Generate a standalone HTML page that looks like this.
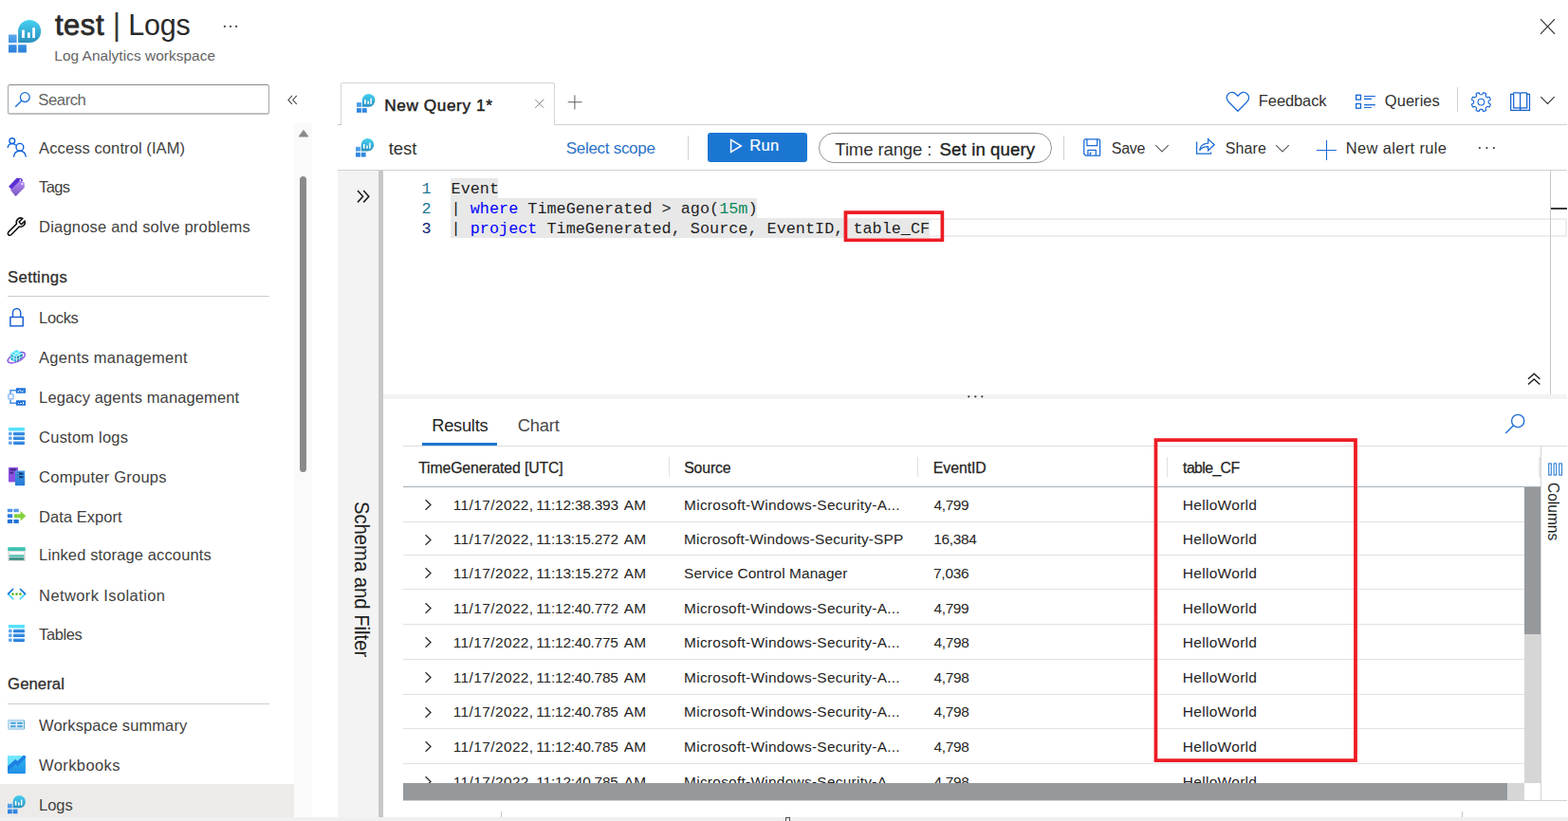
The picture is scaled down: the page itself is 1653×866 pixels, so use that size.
<!DOCTYPE html>
<html lang="en">
<head>
<meta charset="utf-8">
<title>test | Logs - Log Analytics workspace</title>
<style>
*{box-sizing:border-box;margin:0;padding:0}
html,body{width:1653px;height:866px;overflow:hidden;background:#fff}
body{font-family:"Liberation Sans",sans-serif;color:#323130;position:relative}
#app{position:absolute;left:0;top:0;width:1653px;height:866px;overflow:hidden;background:#fff}
.t{position:absolute;white-space:pre;display:block}
.b{position:absolute;display:block}
svg{position:absolute;overflow:visible}
.rot{position:absolute;white-space:pre;transform-origin:0 0;transform:rotate(90deg)}
</style>
</head>
<body>
<div id="app">
<div class="b" style="left:0px;top:862px;width:1653px;height:4px;background:#f0f0f0;"></div>
<div class="b" style="left:8px;top:89px;width:276px;height:32px;border:1px solid #a6a6a6;border-radius:2.5px;background:#fff;border-top-color:#8a8a8a;border-bottom:2px solid #c0c0c0"></div>
<div class="b" style="left:310px;top:130px;width:19px;height:732px;background:#fafafa;"></div>
<svg style="left:314px;top:136px" width="12" height="9" viewBox="0 0 12 9"><path d="M1.2 8 L6 1.4 L10.8 8 Z" fill="#8a8a8a" stroke="#8a8a8a" stroke-width="1" stroke-linejoin="round"/></svg>
<div class="b" style="left:316px;top:186px;width:7px;height:312px;background:#8a8a8a;border-radius:3.5px"></div>
<div class="b" style="left:8px;top:312px;width:276px;height:1px;background:#cdcdcd;"></div>
<div class="b" style="left:8px;top:742px;width:276px;height:1px;background:#cdcdcd;"></div>
<div class="b" style="left:0px;top:827px;width:310px;height:35px;background:#edebe9;"></div>
<div class="b" style="left:359px;top:87px;width:226px;height:45px;border:1px solid #d6d6d6;border-bottom:none;border-radius:2.5px 2.5px 0 0;background:#fff"></div>
<div class="b" style="left:356px;top:131px;width:4px;height:1px;background:#c8c6c4;"></div>
<div class="b" style="left:584px;top:131px;width:1068px;height:1px;background:#d2d0ce;"></div>
<div class="b" style="left:356px;top:179px;width:1296px;height:1px;background:#d2d0ce;"></div>
<div class="b" style="left:725px;top:143px;width:1px;height:26px;background:#d2d0ce;"></div>
<div class="b" style="left:1121px;top:143px;width:1px;height:26px;background:#d2d0ce;"></div>
<div class="b" style="left:1536px;top:92px;width:1px;height:26px;background:#d2d0ce;"></div>
<div class="b" style="left:746px;top:140px;width:105px;height:31px;background:#1b76d2;border-radius:3px"></div>
<div class="b" style="left:863px;top:140px;width:246px;height:32px;border:1px solid #979593;border-radius:16px;background:#fff"></div>
<div class="b" style="left:356px;top:180px;width:43px;height:682px;background:#f3f3f3;"></div>
<div class="b" style="left:399px;top:180px;width:5px;height:682px;background:#c8c8c8;"></div>
<div class="b" style="left:475px;top:188px;width:50px;height:21px;background:#e8e8e8;"></div>
<div class="b" style="left:475px;top:209px;width:323px;height:21px;background:#e8e8e8;"></div>
<div class="b" style="left:475px;top:230px;width:505px;height:21px;background:#e8e8e8;"></div>
<svg style="left:0;top:0" width="1653" height="866" viewBox="0 0 1653 866"><path d="M980 230.3H1651.9V249.9H980Z M980 231.9V248.3H1650.3V231.9Z" fill="#ebebeb" fill-rule="evenodd"/></svg>
<div class="b" style="left:1634px;top:180px;width:1px;height:236px;background:#c8c8c8;"></div>
<div class="b" style="left:1635px;top:219px;width:17px;height:2px;background:#3a3a3a;"></div>
<div class="b" style="left:404px;top:416px;width:1248px;height:5px;background:#f3f3f3;"></div>
<div class="b" style="left:425px;top:470px;width:1227px;height:1px;background:#dcdcdc;"></div>
<div class="b" style="left:445px;top:467.2px;width:79.3px;height:2.6px;background:#1b76d2;"></div>
<div class="b" style="left:705px;top:482px;width:1px;height:21px;background:#e1e1e1;"></div>
<div class="b" style="left:967px;top:482px;width:1px;height:21px;background:#e1e1e1;"></div>
<div class="b" style="left:1230px;top:482px;width:1px;height:21px;background:#e1e1e1;"></div>
<div class="b" style="left:1621.5px;top:482px;width:2px;height:21px;background:#e6e6e6;"></div>
<div class="b" style="left:425px;top:513px;width:1200px;height:1px;background:#a9b1b8;"></div>
<div class="b" style="left:425px;top:550px;width:1182px;height:1px;background:#dfe2e5;"></div>
<div class="b" style="left:425px;top:585px;width:1182px;height:1px;background:#dfe2e5;"></div>
<div class="b" style="left:425px;top:621px;width:1182px;height:1px;background:#dfe2e5;"></div>
<div class="b" style="left:425px;top:658px;width:1182px;height:1px;background:#dfe2e5;"></div>
<div class="b" style="left:425px;top:695px;width:1182px;height:1px;background:#dfe2e5;"></div>
<div class="b" style="left:425px;top:732px;width:1182px;height:1px;background:#dfe2e5;"></div>
<div class="b" style="left:425px;top:768px;width:1182px;height:1px;background:#dfe2e5;"></div>
<div class="b" style="left:425px;top:805px;width:1182px;height:1px;background:#dfe2e5;"></div>
<div class="b" style="left:1624px;top:471px;width:1px;height:374px;background:#d0d4d8;"></div>
<div class="b" style="left:1607px;top:514px;width:17px;height:312px;background:#d6d6d6;"></div>
<div class="b" style="left:1607px;top:514px;width:17px;height:155px;background:#96999c;"></div>
<svg width="0" height="0" style="left:0;top:0"><defs>
<linearGradient id="gb" x1="0" y1="0" x2="0" y2="1"><stop offset="0" stop-color="#45d1f2"/><stop offset="1" stop-color="#2a8fbd"/></linearGradient>
<linearGradient id="gs" x1="0" y1="0" x2="0" y2="1"><stop offset="0" stop-color="#5ea9ee"/><stop offset="1" stop-color="#3d93e6"/></linearGradient>
<linearGradient id="gs2" x1="0" y1="0" x2="0" y2="1"><stop offset="0" stop-color="#3b8fe4"/><stop offset="1" stop-color="#2a7fdb"/></linearGradient>
<linearGradient id="gt" x1="0" y1="0" x2="0" y2="1"><stop offset="0" stop-color="#b38af5"/><stop offset="1" stop-color="#7b55c0"/></linearGradient>
<linearGradient id="gr" x1="0" y1="0" x2="0" y2="1"><stop offset="0" stop-color="#4a9be8"/><stop offset="1" stop-color="#1f78d6"/></linearGradient>
<linearGradient id="gw" x1="0" y1="0" x2="0" y2="1"><stop offset="0" stop-color="#2fa2f0"/><stop offset="1" stop-color="#1c83e0"/></linearGradient>
<g id="logo">
<path d="M10.1 24.1V12.05A12.05 12.05 0 1 1 22.15 24.1Z" fill="url(#gb)"/>
<rect x="14.1" y="10.6" width="2.8" height="8.4" fill="#fff"/>
<rect x="20" y="13.3" width="2.7" height="5.7" fill="#fff"/>
<rect x="25.2" y="8.2" width="2.7" height="10.8" fill="#fff"/>
<rect x="0" y="15.6" width="8.6" height="8.5" rx="0.5" fill="url(#gs)"/>
<rect x="0" y="26.2" width="8.6" height="8.4" rx="0.5" fill="url(#gs2)"/>
<rect x="10.1" y="26.2" width="8.8" height="8.4" rx="0.5" fill="url(#gs2)"/>
</g>
<g id="tbl">
<rect x="0" y="0" width="17" height="3.5" rx="0.5" fill="#55e0fb"/>
<rect x="0" y="4.7" width="3.6" height="3.5" rx="0.8" fill="#63a6ef"/><rect x="5" y="4.7" width="12" height="3.5" rx="0.8" fill="url(#gr)"/>
<rect x="0" y="9.6" width="3.6" height="3.4" rx="0.8" fill="#63a6ef"/><rect x="5" y="9.6" width="12" height="3.4" rx="0.8" fill="url(#gr)"/>
<rect x="0" y="14.5" width="3.6" height="3.4" rx="0.8" fill="#63a6ef"/><rect x="5" y="14.5" width="12" height="3.4" rx="0.8" fill="url(#gr)"/>
</g>
</defs></svg>
<svg style="left:9px;top:20.9px" width="34.20" height="34.6" viewBox="0 0 34.2 34.6"><use href="#logo"/></svg>
<svg style="left:375.8px;top:99.2px" width="19.47" height="19.7" viewBox="0 0 34.2 34.6"><use href="#logo"/></svg>
<svg style="left:375px;top:146px" width="19.27" height="19.5" viewBox="0 0 34.2 34.6"><use href="#logo"/></svg>
<svg style="left:7.9px;top:839.3px" width="18.98" height="19.2" viewBox="0 0 34.2 34.6"><use href="#logo"/></svg>
<svg style="left:15px;top:96px" width="18" height="18" viewBox="0 0 18 18"><circle cx="11.3" cy="6.6" r="4.9" fill="none" stroke="#1a6bd6" stroke-width="1.3"/><path d="M7.8 10.2 L1.2 16.8" stroke="#1a6bd6" stroke-width="1.3" fill="none"/></svg>
<svg style="left:303.4px;top:100.2px" width="11" height="11" viewBox="0 0 11 11"><path d="M5 0.9 L0.9 5.4 L5 9.8 M9.8 0.9 L5.7 5.4 L9.8 9.8" fill="none" stroke="#484644" stroke-width="1.05"/></svg>
<svg style="left:7px;top:144px" width="22" height="23" viewBox="0 0 22 23"><g fill="none" stroke="#0f62d8" stroke-width="1.4" stroke-linecap="round"><circle cx="5.8" cy="4.6" r="2.9"/><path d="M1.3 11.3 C1.6 8.6 3.6 7.6 5.8 7.6 C7.2 7.6 8.4 8 9.2 8.8"/><circle cx="13.9" cy="11.3" r="3.9"/><path d="M7.6 21 C8.2 17.2 10.8 15.3 13.9 15.3 C17 15.3 19.6 17.2 20.2 21"/></g></svg>
<svg style="left:4px;top:184px" width="28" height="26" viewBox="0 0 28 26"><path d="M5.1 12.7 L13.1 4.3 Q13.7 3.8 14.5 3.8 L17.6 4 Q18.4 4.1 18.9 4.7 L20.3 6.4 L8.2 15.9 Z" fill="#5d30d4"/><path d="M7.1 16.4 L16.1 7.6 L20.4 8 Q21.6 8.2 21.7 9.3 L21.9 13 Q21.9 13.7 21.4 14.2 L13.3 22.6 Q12.6 23.2 11.9 22.5 Z" fill="url(#gt)"/><ellipse cx="17.4" cy="6.4" rx="0.85" ry="1.15" fill="#fff"/><ellipse cx="19.45" cy="10.1" rx="0.85" ry="1.15" fill="#fff"/></svg>
<svg style="left:4px;top:226px" width="28" height="26" viewBox="0 0 28 26"><path d="M13.53 10.14 L4.79 18.89 A2 2 0 0 0 7.61 21.71 L16.44 12.89 A4.55 4.55 0 0 0 22.1 7.0 L18.6 10.7 L16.1 7.9 L20.0 4.55 A4.55 4.55 0 0 0 13.53 10.14 Z" fill="none" stroke="#111" stroke-width="1.5" stroke-linejoin="round"/></svg>
<svg style="left:9px;top:324px" width="17" height="22" viewBox="0 0 17 22"><g fill="none" stroke="#1a5fd6" stroke-width="1.45"><rect x="1.85" y="10.5" width="13.4" height="9.35"/><path d="M4.45 10.5 V6.1 A4.15 4.6 0 0 1 12.75 6.1 V10.5"/></g></svg>
<svg style="left:4px;top:364px" width="28" height="26" viewBox="0 0 28 26"><ellipse cx="13.35" cy="13.2" rx="9.9" ry="4.3" transform="rotate(-25 13.35 13.2)" fill="none" stroke="#7a48d8" stroke-width="1.3"/><path d="M13.35 4.95 L19.8 8.7 L13.5 12 L7.2 9 Z" fill="#4fe2fd"/><path d="M7.2 9 L13.5 12 V18.6 L7.2 15.6 Z" fill="#2fb4d6"/><path d="M13.5 12 L19.8 8.7 V15 L13.5 18.6 Z" fill="#1a82ae"/><path d="M10.3 7 L16.65 10.35 M16.6 6.85 L10.35 10.5 M10.35 10.5 V17.1 M16.65 10.35 V16.8 M7.2 12.3 L13.5 15.3 L19.8 11.85 M13.5 12 V18.6 M7.2 9 L13.5 12 L19.8 8.7" stroke="#e6fbff" stroke-width="0.75" fill="none"/><path d="M4.38 17.38 A9.9 4.3 -25 0 0 22.32 9.02" fill="none" stroke="#a670f2" stroke-width="1.3"/></svg>
<svg style="left:4px;top:406px" width="28" height="26" viewBox="0 0 28 26"><path d="M7.05 9.5 V5.7 H13 M7.05 15.4 V19.2 H13" fill="none" stroke="#4a90e6" stroke-width="1.5"/><rect x="4.85" y="9.95" width="5.2" height="5" rx="0.8" fill="#fff" stroke="#86b6f1" stroke-width="1.3"/><rect x="12.9" y="3.2" width="10.1" height="5.6" rx="0.5" fill="#1f73d8"/><rect x="12.9" y="16.2" width="10.1" height="5.6" rx="0.5" fill="#1f73d8"/><path d="M14.7 7.3 L16.8 5.6 L19.1 7.2 L21.4 5.3" stroke="#e3effc" stroke-width="1.25" fill="none" stroke-dasharray="1.6 1.1"/><path d="M14.9 19.5 H16 M17.1 19.5 H19 M20.6 18 V20.3" stroke="#f2f7fd" stroke-width="1.2" fill="none"/></svg>
<svg style="left:9px;top:451.4px" width="17" height="18" viewBox="0 0 17 18"><use href="#tbl"/></svg>
<svg style="left:9px;top:659.3px" width="17" height="18" viewBox="0 0 17 18"><use href="#tbl"/></svg>
<svg style="left:8px;top:492px" width="20" height="21" viewBox="0 0 20 21"><rect x="1" y="1" width="10" height="15.4" rx="0.6" fill="#8b4fe0"/><rect x="2.4" y="2.6" width="6.6" height="1.9" rx="0.9" fill="#3a2a78"/><rect x="2.4" y="5.8" width="3.6" height="1.9" rx="0.9" fill="#3a2a78"/><rect x="8" y="4.6" width="10.2" height="15.6" rx="0.6" fill="url(#gr)"/><rect x="9.8" y="6.6" width="6.8" height="2.1" rx="1" fill="#0e3a7a"/><rect x="9.8" y="10.2" width="6.8" height="2.1" rx="1" fill="#0e3a7a"/><rect x="10.3" y="7.1" width="1.6" height="1.1" fill="#9fd0ff"/><rect x="10.3" y="10.7" width="1.6" height="1.1" fill="#9fd0ff"/></svg>
<svg style="left:7px;top:536px" width="21" height="17" viewBox="0 0 21 17"><g><rect x="0.9" y="0.7" width="5.2" height="3.6" rx="0.5" fill="#5292e8"/><rect x="7.4" y="0.7" width="5.4" height="3.6" rx="0.5" fill="#5c9bea"/><rect x="0.9" y="6.3" width="5.2" height="3.8" rx="0.5" fill="#2b7bdc"/><rect x="0.9" y="12.1" width="5.2" height="3.8" rx="0.5" fill="#1f73d8"/><rect x="7.4" y="12.1" width="5.4" height="3.8" rx="0.5" fill="#1f73d8"/><path d="M8 6.3 H14.6 V2.9 L20.3 8.2 L14.6 13.4 V10.2 H8 Z" fill="#84d13a"/></g></svg>
<svg style="left:8px;top:577px" width="19" height="16" viewBox="0 0 19 16"><rect x="0.3" y="0.2" width="18.4" height="3.9" fill="#3cc3b2"/><rect x="0.3" y="4.1" width="18.4" height="10.9" fill="#d9d9d9"/><rect x="1.7" y="5" width="15.6" height="2.7" fill="#fff"/><rect x="1.7" y="8.4" width="15.6" height="2.1" fill="#45c4b4"/><rect x="1.7" y="11.4" width="15.6" height="2.3" fill="#27857a"/></svg>
<svg style="left:4px;top:612px" width="28" height="28" viewBox="0 0 28 28"><g fill="none" stroke-width="1.75" stroke-linecap="round"><path d="M4.7 14.6 L9.65 19.6 M22.45 14.6 L17.4 19.7" stroke="#45d6fb"/><path d="M9.5 9.5 L4.7 14.45 M17.5 9.5 L22.45 14.45" stroke="#1476d6"/></g><circle cx="9.55" cy="14.65" r="1.3" fill="#5fb51e"/><circle cx="13.5" cy="14.65" r="1.3" fill="#5fb51e"/><circle cx="17.45" cy="14.65" r="1.3" fill="#5fb51e"/></svg>
<svg style="left:4px;top:752px" width="28" height="26" viewBox="0 0 28 26"><rect x="4.5" y="7.35" width="17.3" height="10.2" rx="1.2" fill="#b9d9ee" stroke="#a4cce8" stroke-width="0.7"/><rect x="20.9" y="8.2" width="1" height="8.6" fill="#4fa3d4"/><path d="M6.45 9 V16 M13.35 9 V16 M20.3 9 V16 M6.3 12.45 H20.5" stroke="#fff" stroke-width="0.7" fill="none"/><g fill="#47a5da"><rect x="7.05" y="10.05" width="5.55" height="1.7" rx="0.5"/><rect x="14.1" y="10.05" width="5.7" height="1.7" rx="0.5"/><rect x="7.05" y="13.3" width="5.55" height="1.6" rx="0.5"/><rect x="14.1" y="13.3" width="5.7" height="1.6" rx="0.5"/></g></svg>
<svg style="left:4px;top:793px" width="28" height="26" viewBox="0 0 28 26"><defs><linearGradient id="gwk" x1="0" y1="0" x2="0" y2="1"><stop offset="0" stop-color="#2bb6f0"/><stop offset="1" stop-color="#2090e8"/></linearGradient><linearGradient id="gwl" x1="0" y1="0" x2="0" y2="1"><stop offset="0" stop-color="#77e9fc"/><stop offset="1" stop-color="#5fd8f8"/></linearGradient><clipPath id="cwk"><rect x="4.05" y="3.9" width="18.9" height="19.05" rx="1.1"/></clipPath></defs><g clip-path="url(#cwk)"><rect x="4.05" y="3.9" width="18.9" height="19.05" fill="url(#gwk)"/><path d="M4.05 3.9 H20.7 L14.4 10.05 L12.3 7.95 L4.05 15.6 Z" fill="url(#gwl)"/><path d="M4.05 15.6 L12.3 7.95 L14.4 10.05 L20.7 3.9 H22.95 V6.45 L14.4 15 L12.3 12.9 L4.05 20.7 Z" fill="#1f7fe0"/><path d="M4.05 20.7 V22.95 H22.95 V21.9 H5.1 V19.7 Z" fill="#1a82e2" opacity="0.6"/></g></svg>
<svg style="left:563px;top:104px" width="11" height="11" viewBox="0 0 11 11"><path d="M1.2 0.8 L10.2 9.8 M10.2 0.8 L1.2 9.8" stroke="#8a8886" stroke-width="1" fill="none"/></svg>
<svg style="left:598px;top:100px" width="16" height="16" viewBox="0 0 16 16"><path d="M7.9 0.3 V15.4 M0.7 7.75 H15.5" stroke="#605e5c" stroke-width="1" fill="none"/></svg>
<svg style="left:1292px;top:96px" width="26" height="23" viewBox="0 0 26 23"><path d="M12.9 21.2 L2.8 11 C0.6 8.6 0.7 5 3 2.9 C5.3 0.8 8.8 1 10.9 3.2 L12.9 5.2 L14.9 3.2 C17 1 20.5 0.8 22.8 2.9 C25.1 5 25.2 8.6 23 11 Z" fill="none" stroke="#1a6bd6" stroke-width="1.3" stroke-linejoin="round"/></svg>
<svg style="left:1428px;top:99px" width="23" height="17" viewBox="0 0 23 17"><g fill="none" stroke="#1464d2" stroke-width="1.3"><rect x="1.65" y="1.3" width="4.8" height="4.8"/><rect x="1.65" y="10.45" width="4.8" height="4.75"/><path d="M10 2.5 H21.85 M10 5.3 H17.9 M10 11.6 H21.85 M10 14.5 H17.9" stroke-width="1.15"/></g></svg>
<svg style="left:1550px;top:96px" width="23" height="23" viewBox="0 0 23 23"><path d="M13.88 1.60 L16.71 2.78 L16.09 5.25 L17.75 6.91 L20.22 6.29 L21.40 9.12 L19.21 10.43 L19.21 12.77 L21.40 14.08 L20.22 16.91 L17.75 16.29 L16.09 17.95 L16.71 20.42 L13.88 21.60 L12.57 19.41 L10.23 19.41 L8.92 21.60 L6.09 20.42 L6.71 17.95 L5.05 16.29 L2.58 16.91 L1.40 14.08 L3.59 12.77 L3.59 10.43 L1.40 9.12 L2.58 6.29 L5.05 6.91 L6.71 5.25 L6.09 2.78 L8.92 1.60 L10.23 3.79 L12.57 3.79 Z" fill="none" stroke="#1a6bd6" stroke-width="1.15" stroke-linejoin="round"/><circle cx="11.4" cy="11.6" r="3.4" fill="none" stroke="#1a6bd6" stroke-width="1.15"/></svg>
<svg style="left:1591px;top:96px" width="23" height="22" viewBox="0 0 23 22"><g fill="none" stroke="#1464d2" stroke-width="1.25"><path d="M4.7 3.3 H1.7 V20.3 H21.5 V3.3 H18.7"/><path d="M4.7 2.6 Q4.7 1.9 5.4 1.9 H10.4 Q11.6 1.9 11.6 3 Q11.6 1.9 12.8 1.9 H18 Q18.7 1.9 18.7 2.6 V17.9 H12.8 Q11.6 17.9 11.6 19 Q11.6 17.9 10.4 17.9 H4.7 Z"/><path d="M11.6 3 V20.3"/></g></svg>
<svg style="left:1623px;top:101px" width="17" height="11" viewBox="0 0 17 11"><path d="M1.3 1.2 L8.5 8.4 L15.7 1.2" fill="none" stroke="#323130" stroke-width="1.1"/></svg>
<svg style="left:1623px;top:19px" width="17" height="18" viewBox="0 0 17 18"><path d="M1 1.2 L16.1 16.8 M16.1 1.2 L1 16.8" fill="none" stroke="#323130" stroke-width="1.15"/></svg>
<svg style="left:235px;top:26px" width="16" height="4" viewBox="0 0 16 4"><circle cx="1.9" cy="1.9" r="1.1" fill="#484644"/><circle cx="8" cy="1.9" r="1.1" fill="#484644"/><circle cx="14.1" cy="1.9" r="1.1" fill="#484644"/></svg>
<svg style="left:769px;top:146px" width="14" height="16" viewBox="0 0 14 16"><path d="M1.6 1.5 L12.2 7.9 L1.6 14.4 Z" fill="none" stroke="#fff" stroke-width="1.55" stroke-linejoin="miter"/></svg>
<svg style="left:1141px;top:145px" width="21" height="21" viewBox="0 0 21 21"><g fill="none" stroke="#1a6bd6" stroke-width="1.25" stroke-linejoin="round"><path d="M3.2 1.85 H17.1 Q18.6 1.85 18.6 3.3 V19 H3.6 L1.75 17.2 V3.3 Q1.75 1.85 3.2 1.85 Z"/><path d="M4.9 1.85 V8.7 H15.7 V1.85"/><path d="M5.9 19 V13.3 H14.3 V19"/><path d="M8.2 19 V16.4 H9.6"/></g></svg>
<svg style="left:1216.6px;top:152px" width="16" height="10" viewBox="0 0 16 10"><path d="M1.2 1.2 L8 8 L14.8 1.2" fill="none" stroke="#5a5856" stroke-width="1.1"/></svg>
<svg style="left:1344.4px;top:152px" width="16" height="10" viewBox="0 0 16 10"><path d="M1.2 1.2 L8 8 L14.8 1.2" fill="none" stroke="#5a5856" stroke-width="1.1"/></svg>
<svg style="left:1260px;top:144px" width="22" height="20" viewBox="0 0 22 20"><g fill="none" stroke="#1a6bd6" stroke-width="1.25" stroke-linejoin="miter"><path d="M1.6 5.6 V18.2 H16.5 V16.4"/><path d="M4.6 14.6 C5.2 10 8.6 7.4 13.6 7.2 V2.6 L20.2 8.8 L13.6 14.8 V10.6 C9.8 10.6 6.6 11.8 4.6 14.6 Z"/></g></svg>
<svg style="left:1387px;top:147px" width="23" height="23" viewBox="0 0 23 23"><path d="M11.5 1 V22 M0.9 11.5 H21.9" stroke="#1a6bd6" stroke-width="1.1" fill="none"/></svg>
<svg style="left:1558px;top:154px" width="19" height="4" viewBox="0 0 19 4"><circle cx="1.9" cy="2" r="1.05" fill="#323130"/><circle cx="9.4" cy="2" r="1.05" fill="#323130"/><circle cx="16.9" cy="2" r="1.05" fill="#323130"/></svg>
<svg style="left:376px;top:200px" width="14" height="14" viewBox="0 0 14 14"><path d="M1 1 L6.6 7.2 L1 13.4 M7.2 1 L12.8 7.2 L7.2 13.4" fill="none" stroke="#201f1e" stroke-width="1.6"/></svg>
<svg style="left:1610px;top:393px" width="15" height="14" viewBox="0 0 15 14"><path d="M1 6.8 L7.2 1.2 L13.4 6.8 M1 12.6 L7.2 7 L13.4 12.6" fill="none" stroke="#201f1e" stroke-width="1.4"/></svg>
<svg style="left:1019px;top:416px" width="18" height="5" viewBox="0 0 18 5"><circle cx="2.3" cy="2.3" r="1.15" fill="#3b3a39"/><circle cx="9.3" cy="2.3" r="1.15" fill="#3b3a39"/><circle cx="16.3" cy="2.3" r="1.15" fill="#3b3a39"/></svg>
<svg style="left:1586px;top:436px" width="23" height="23" viewBox="0 0 23 23"><circle cx="14.2" cy="8" r="6.6" fill="none" stroke="#1a6bd6" stroke-width="1.3"/><path d="M9.5 12.7 L1.2 21" stroke="#1a6bd6" stroke-width="1.3" fill="none"/></svg>
<svg style="left:1631px;top:488px" width="17" height="14" viewBox="0 0 17 14"><g fill="none" stroke="#2b7cd3" stroke-width="1.1"><rect x="1.7" y="0.9" width="2.6" height="12.2"/><rect x="7.15" y="0.9" width="2.6" height="12.2"/><rect x="12.75" y="0.9" width="2.75" height="12.2"/></g></svg>
<svg style="left:447px;top:526.1px" width="9" height="13" viewBox="0 0 9 13"><path d="M1.6 1.3 L7 6.5 L1.6 11.7" fill="none" stroke="#323130" stroke-width="1.35"/></svg>
<svg style="left:447px;top:562.7px" width="9" height="13" viewBox="0 0 9 13"><path d="M1.6 1.3 L7 6.5 L1.6 11.7" fill="none" stroke="#323130" stroke-width="1.35"/></svg>
<svg style="left:447px;top:598.1px" width="9" height="13" viewBox="0 0 9 13"><path d="M1.6 1.3 L7 6.5 L1.6 11.7" fill="none" stroke="#323130" stroke-width="1.35"/></svg>
<svg style="left:447px;top:634.7px" width="9" height="13" viewBox="0 0 9 13"><path d="M1.6 1.3 L7 6.5 L1.6 11.7" fill="none" stroke="#323130" stroke-width="1.35"/></svg>
<svg style="left:447px;top:671.1px" width="9" height="13" viewBox="0 0 9 13"><path d="M1.6 1.3 L7 6.5 L1.6 11.7" fill="none" stroke="#323130" stroke-width="1.35"/></svg>
<svg style="left:447px;top:707.9px" width="9" height="13" viewBox="0 0 9 13"><path d="M1.6 1.3 L7 6.5 L1.6 11.7" fill="none" stroke="#323130" stroke-width="1.35"/></svg>
<svg style="left:447px;top:744.5px" width="9" height="13" viewBox="0 0 9 13"><path d="M1.6 1.3 L7 6.5 L1.6 11.7" fill="none" stroke="#323130" stroke-width="1.35"/></svg>
<svg style="left:447px;top:781.1px" width="9" height="13" viewBox="0 0 9 13"><path d="M1.6 1.3 L7 6.5 L1.6 11.7" fill="none" stroke="#323130" stroke-width="1.35"/></svg>
<svg style="left:447px;top:817.7px" width="9" height="13" viewBox="0 0 9 13"><path d="M1.6 1.3 L7 6.5 L1.6 11.7" fill="none" stroke="#323130" stroke-width="1.35"/></svg>
<span class="t" style="left:57.92px;top:7.00px;font-size:31px;line-height:40px;font-weight:400;color:#2b2a29;letter-spacing:0.541px;-webkit-text-stroke:0.75px #2b2a29;">test</span>
<span class="t" style="left:118.75px;top:5.00px;font-size:32.5px;line-height:42px;font-weight:400;color:#3b3a39;letter-spacing:0.000px;">|</span>
<span class="t" style="left:135.17px;top:6.00px;font-size:30.5px;line-height:40px;font-weight:400;color:#2b2a29;letter-spacing:-0.210px;">Logs</span>
<span class="t" style="left:57.30px;top:49.00px;font-size:15.4px;line-height:20px;font-weight:400;color:#646464;letter-spacing:0.052px;">Log Analytics workspace</span>
<span class="t" style="left:40.34px;top:95.00px;font-size:16.7px;line-height:22px;font-weight:400;color:#646464;letter-spacing:-0.464px;">Search</span>
<span class="t" style="left:41.10px;top:146.00px;font-size:16.5px;line-height:21px;font-weight:400;color:#424140;letter-spacing:0.092px;">Access control (IAM)</span>
<span class="t" style="left:41.10px;top:187.00px;font-size:16.5px;line-height:21px;font-weight:400;color:#424140;letter-spacing:-0.641px;">Tags</span>
<span class="t" style="left:41.10px;top:229.00px;font-size:16.5px;line-height:21px;font-weight:400;color:#424140;letter-spacing:0.202px;">Diagnose and solve problems</span>
<span class="t" style="left:41.10px;top:325.00px;font-size:16.5px;line-height:21px;font-weight:400;color:#424140;letter-spacing:-0.351px;">Locks</span>
<span class="t" style="left:41.10px;top:367.00px;font-size:16.5px;line-height:21px;font-weight:400;color:#424140;letter-spacing:0.259px;">Agents management</span>
<span class="t" style="left:41.10px;top:409.00px;font-size:16.5px;line-height:21px;font-weight:400;color:#424140;letter-spacing:0.123px;">Legacy agents management</span>
<span class="t" style="left:41.10px;top:451.00px;font-size:16.5px;line-height:21px;font-weight:400;color:#424140;letter-spacing:0.223px;">Custom logs</span>
<span class="t" style="left:41.10px;top:493.00px;font-size:16.5px;line-height:21px;font-weight:400;color:#424140;letter-spacing:0.234px;">Computer Groups</span>
<span class="t" style="left:41.10px;top:535.00px;font-size:16.5px;line-height:21px;font-weight:400;color:#424140;letter-spacing:0.041px;">Data Export</span>
<span class="t" style="left:41.10px;top:575.00px;font-size:16.5px;line-height:21px;font-weight:400;color:#424140;letter-spacing:0.126px;">Linked storage accounts</span>
<span class="t" style="left:41.10px;top:618.00px;font-size:16.5px;line-height:21px;font-weight:400;color:#424140;letter-spacing:0.395px;">Network Isolation</span>
<span class="t" style="left:41.10px;top:659.00px;font-size:16.5px;line-height:21px;font-weight:400;color:#424140;letter-spacing:-0.387px;">Tables</span>
<span class="t" style="left:41.10px;top:755.00px;font-size:16.5px;line-height:21px;font-weight:400;color:#424140;letter-spacing:0.092px;">Workspace summary</span>
<span class="t" style="left:41.10px;top:797.00px;font-size:16.5px;line-height:21px;font-weight:400;color:#424140;letter-spacing:0.386px;">Workbooks</span>
<span class="t" style="left:41.10px;top:839.00px;font-size:16.5px;line-height:21px;font-weight:400;color:#424140;letter-spacing:-0.060px;">Logs</span>
<span class="t" style="left:8.11px;top:282.00px;font-size:16.7px;line-height:22px;font-weight:400;color:#2f2e2d;letter-spacing:0.331px;-webkit-text-stroke:0.3px #2f2e2d;">Settings</span>
<span class="t" style="left:8.10px;top:711.00px;font-size:16.7px;line-height:22px;font-weight:400;color:#2f2e2d;letter-spacing:0.065px;-webkit-text-stroke:0.3px #2f2e2d;">General</span>
<span class="t" style="left:405.24px;top:100.00px;font-size:17.2px;line-height:22px;font-weight:400;color:#252423;letter-spacing:0.600px;-webkit-text-stroke:0.5px #252423;">New Query 1*</span>
<span class="t" style="left:409.70px;top:145.00px;font-size:18.5px;line-height:24px;font-weight:400;color:#323130;letter-spacing:-0.077px;">test</span>
<span class="t" style="left:596.74px;top:146.00px;font-size:17.0px;line-height:22px;font-weight:400;color:#2b72c9;letter-spacing:-0.291px;">Select scope</span>
<span class="t" style="left:790.37px;top:143.00px;font-size:16.5px;line-height:21px;font-weight:400;color:#ffffff;letter-spacing:0.327px;-webkit-text-stroke:0.2px #ffffff;">Run</span>
<span class="t" style="left:880.37px;top:146.00px;font-size:18.6px;line-height:24px;font-weight:400;color:#323130;letter-spacing:-0.146px;">Time range :</span>
<span class="t" style="left:990.59px;top:146.00px;font-size:18.6px;line-height:24px;font-weight:400;color:#201f1e;letter-spacing:0.119px;-webkit-text-stroke:0.35px #201f1e;">Set in query</span>
<span class="t" style="left:1171.84px;top:146.00px;font-size:16.0px;line-height:21px;font-weight:400;color:#323130;letter-spacing:-0.330px;">Save</span>
<span class="t" style="left:1291.84px;top:146.00px;font-size:16.0px;line-height:21px;font-weight:400;color:#323130;letter-spacing:0.084px;">Share</span>
<span class="t" style="left:1418.85px;top:146.00px;font-size:16.5px;line-height:21px;font-weight:400;color:#323130;letter-spacing:0.327px;">New alert rule</span>
<span class="t" style="left:1326.85px;top:96.00px;font-size:16.5px;line-height:21px;font-weight:400;color:#323130;letter-spacing:-0.112px;">Feedback</span>
<span class="t" style="left:1459.84px;top:96.00px;font-size:16.5px;line-height:21px;font-weight:400;color:#323130;letter-spacing:0.032px;">Queries</span>
<span class="t" style="left:455.31px;top:437.00px;font-size:18.3px;line-height:24px;font-weight:400;color:#252423;letter-spacing:-0.275px;">Results</span>
<span class="t" style="left:545.65px;top:437.00px;font-size:18.3px;line-height:24px;font-weight:400;color:#4a4948;letter-spacing:-0.115px;">Chart</span>
<span class="t" style="left:441.17px;top:483.00px;font-size:15.8px;line-height:21px;font-weight:400;color:#252423;letter-spacing:-0.128px;-webkit-text-stroke:0.25px #252423;">TimeGenerated [UTC]</span>
<span class="t" style="left:721.19px;top:483.00px;font-size:15.8px;line-height:21px;font-weight:400;color:#252423;letter-spacing:-0.133px;-webkit-text-stroke:0.25px #252423;">Source</span>
<span class="t" style="left:983.77px;top:483.00px;font-size:15.8px;line-height:21px;font-weight:400;color:#252423;letter-spacing:-0.032px;-webkit-text-stroke:0.25px #252423;">EventID</span>
<span class="t" style="left:1247.11px;top:483.00px;font-size:15.8px;line-height:21px;font-weight:400;color:#252423;letter-spacing:-0.596px;-webkit-text-stroke:0.25px #252423;">table_CF</span>
<span class="t" style="left:477.64px;top:523.00px;font-size:15.4px;line-height:20px;font-weight:400;color:#252423;letter-spacing:0.436px;">11/17/2022,</span>
<span class="t" style="left:565.37px;top:523.00px;font-size:15.4px;line-height:20px;font-weight:400;color:#252423;letter-spacing:-0.187px;">11:12:38.393</span>
<span class="t" style="left:657.64px;top:523.00px;font-size:15.4px;line-height:20px;font-weight:400;color:#252423;letter-spacing:0.450px;">AM</span>
<span class="t" style="left:721.08px;top:523.00px;font-size:15.4px;line-height:20px;font-weight:400;color:#252423;letter-spacing:0.287px;">Microsoft-Windows-Security-A...</span>
<span class="t" style="left:984.50px;top:523.00px;font-size:15.4px;line-height:20px;font-weight:400;color:#252423;letter-spacing:-0.344px;">4,799</span>
<span class="t" style="left:1246.84px;top:523.00px;font-size:15.5px;line-height:20px;font-weight:400;color:#252423;letter-spacing:0.288px;">HelloWorld</span>
<span class="t" style="left:477.64px;top:559.00px;font-size:15.4px;line-height:20px;font-weight:400;color:#252423;letter-spacing:0.436px;">11/17/2022,</span>
<span class="t" style="left:565.37px;top:559.00px;font-size:15.4px;line-height:20px;font-weight:400;color:#252423;letter-spacing:-0.190px;">11:13:15.272</span>
<span class="t" style="left:657.64px;top:559.00px;font-size:15.4px;line-height:20px;font-weight:400;color:#252423;letter-spacing:0.450px;">AM</span>
<span class="t" style="left:721.08px;top:559.00px;font-size:15.4px;line-height:20px;font-weight:400;color:#252423;letter-spacing:0.156px;">Microsoft-Windows-Security-SPP</span>
<span class="t" style="left:984.22px;top:559.00px;font-size:15.4px;line-height:20px;font-weight:400;color:#252423;letter-spacing:-0.280px;">16,384</span>
<span class="t" style="left:1246.84px;top:559.00px;font-size:15.5px;line-height:20px;font-weight:400;color:#252423;letter-spacing:0.288px;">HelloWorld</span>
<span class="t" style="left:477.64px;top:595.00px;font-size:15.4px;line-height:20px;font-weight:400;color:#252423;letter-spacing:0.436px;">11/17/2022,</span>
<span class="t" style="left:565.37px;top:595.00px;font-size:15.4px;line-height:20px;font-weight:400;color:#252423;letter-spacing:-0.190px;">11:13:15.272</span>
<span class="t" style="left:657.64px;top:595.00px;font-size:15.4px;line-height:20px;font-weight:400;color:#252423;letter-spacing:0.450px;">AM</span>
<span class="t" style="left:721.09px;top:595.00px;font-size:15.4px;line-height:20px;font-weight:400;color:#252423;letter-spacing:0.095px;">Service Control Manager</span>
<span class="t" style="left:983.99px;top:595.00px;font-size:15.4px;line-height:20px;font-weight:400;color:#252423;letter-spacing:-0.221px;">7,036</span>
<span class="t" style="left:1246.84px;top:595.00px;font-size:15.5px;line-height:20px;font-weight:400;color:#252423;letter-spacing:0.288px;">HelloWorld</span>
<span class="t" style="left:477.64px;top:632.00px;font-size:15.4px;line-height:20px;font-weight:400;color:#252423;letter-spacing:0.436px;">11/17/2022,</span>
<span class="t" style="left:565.37px;top:632.00px;font-size:15.4px;line-height:20px;font-weight:400;color:#252423;letter-spacing:-0.190px;">11:12:40.772</span>
<span class="t" style="left:657.64px;top:632.00px;font-size:15.4px;line-height:20px;font-weight:400;color:#252423;letter-spacing:0.450px;">AM</span>
<span class="t" style="left:721.08px;top:632.00px;font-size:15.4px;line-height:20px;font-weight:400;color:#252423;letter-spacing:0.287px;">Microsoft-Windows-Security-A...</span>
<span class="t" style="left:984.50px;top:632.00px;font-size:15.4px;line-height:20px;font-weight:400;color:#252423;letter-spacing:-0.344px;">4,799</span>
<span class="t" style="left:1246.84px;top:632.00px;font-size:15.5px;line-height:20px;font-weight:400;color:#252423;letter-spacing:0.288px;">HelloWorld</span>
<span class="t" style="left:477.64px;top:668.00px;font-size:15.4px;line-height:20px;font-weight:400;color:#252423;letter-spacing:0.436px;">11/17/2022,</span>
<span class="t" style="left:565.37px;top:668.00px;font-size:15.4px;line-height:20px;font-weight:400;color:#252423;letter-spacing:-0.199px;">11:12:40.775</span>
<span class="t" style="left:657.64px;top:668.00px;font-size:15.4px;line-height:20px;font-weight:400;color:#252423;letter-spacing:0.450px;">AM</span>
<span class="t" style="left:721.08px;top:668.00px;font-size:15.4px;line-height:20px;font-weight:400;color:#252423;letter-spacing:0.287px;">Microsoft-Windows-Security-A...</span>
<span class="t" style="left:984.50px;top:668.00px;font-size:15.4px;line-height:20px;font-weight:400;color:#252423;letter-spacing:-0.288px;">4,798</span>
<span class="t" style="left:1246.84px;top:668.00px;font-size:15.5px;line-height:20px;font-weight:400;color:#252423;letter-spacing:0.288px;">HelloWorld</span>
<span class="t" style="left:477.64px;top:705.00px;font-size:15.4px;line-height:20px;font-weight:400;color:#252423;letter-spacing:0.436px;">11/17/2022,</span>
<span class="t" style="left:565.37px;top:705.00px;font-size:15.4px;line-height:20px;font-weight:400;color:#252423;letter-spacing:-0.199px;">11:12:40.785</span>
<span class="t" style="left:657.64px;top:705.00px;font-size:15.4px;line-height:20px;font-weight:400;color:#252423;letter-spacing:0.450px;">AM</span>
<span class="t" style="left:721.08px;top:705.00px;font-size:15.4px;line-height:20px;font-weight:400;color:#252423;letter-spacing:0.287px;">Microsoft-Windows-Security-A...</span>
<span class="t" style="left:984.50px;top:705.00px;font-size:15.4px;line-height:20px;font-weight:400;color:#252423;letter-spacing:-0.288px;">4,798</span>
<span class="t" style="left:1246.84px;top:705.00px;font-size:15.5px;line-height:20px;font-weight:400;color:#252423;letter-spacing:0.288px;">HelloWorld</span>
<span class="t" style="left:477.64px;top:741.00px;font-size:15.4px;line-height:20px;font-weight:400;color:#252423;letter-spacing:0.436px;">11/17/2022,</span>
<span class="t" style="left:565.37px;top:741.00px;font-size:15.4px;line-height:20px;font-weight:400;color:#252423;letter-spacing:-0.199px;">11:12:40.785</span>
<span class="t" style="left:657.64px;top:741.00px;font-size:15.4px;line-height:20px;font-weight:400;color:#252423;letter-spacing:0.450px;">AM</span>
<span class="t" style="left:721.08px;top:741.00px;font-size:15.4px;line-height:20px;font-weight:400;color:#252423;letter-spacing:0.287px;">Microsoft-Windows-Security-A...</span>
<span class="t" style="left:984.50px;top:741.00px;font-size:15.4px;line-height:20px;font-weight:400;color:#252423;letter-spacing:-0.288px;">4,798</span>
<span class="t" style="left:1246.84px;top:741.00px;font-size:15.5px;line-height:20px;font-weight:400;color:#252423;letter-spacing:0.288px;">HelloWorld</span>
<span class="t" style="left:477.64px;top:778.00px;font-size:15.4px;line-height:20px;font-weight:400;color:#252423;letter-spacing:0.436px;">11/17/2022,</span>
<span class="t" style="left:565.37px;top:778.00px;font-size:15.4px;line-height:20px;font-weight:400;color:#252423;letter-spacing:-0.199px;">11:12:40.785</span>
<span class="t" style="left:657.64px;top:778.00px;font-size:15.4px;line-height:20px;font-weight:400;color:#252423;letter-spacing:0.450px;">AM</span>
<span class="t" style="left:721.08px;top:778.00px;font-size:15.4px;line-height:20px;font-weight:400;color:#252423;letter-spacing:0.287px;">Microsoft-Windows-Security-A...</span>
<span class="t" style="left:984.50px;top:778.00px;font-size:15.4px;line-height:20px;font-weight:400;color:#252423;letter-spacing:-0.288px;">4,798</span>
<span class="t" style="left:1246.84px;top:778.00px;font-size:15.5px;line-height:20px;font-weight:400;color:#252423;letter-spacing:0.288px;">HelloWorld</span>
<span class="t" style="left:477.64px;top:815.00px;font-size:15.4px;line-height:20px;font-weight:400;color:#252423;letter-spacing:0.436px;">11/17/2022,</span>
<span class="t" style="left:565.37px;top:815.00px;font-size:15.4px;line-height:20px;font-weight:400;color:#252423;letter-spacing:-0.199px;">11:12:40.785</span>
<span class="t" style="left:657.64px;top:815.00px;font-size:15.4px;line-height:20px;font-weight:400;color:#252423;letter-spacing:0.450px;">AM</span>
<span class="t" style="left:721.08px;top:815.00px;font-size:15.4px;line-height:20px;font-weight:400;color:#252423;letter-spacing:0.287px;">Microsoft-Windows-Security-A...</span>
<span class="t" style="left:984.50px;top:815.00px;font-size:15.4px;line-height:20px;font-weight:400;color:#252423;letter-spacing:-0.288px;">4,798</span>
<span class="t" style="left:1246.84px;top:815.00px;font-size:15.5px;line-height:20px;font-weight:400;color:#252423;letter-spacing:0.288px;">HelloWorld</span>
<div class="t" style="left:444.4px;top:189px;font:16.8px/21px 'Liberation Mono',monospace;color:#237893;">1
2
<span style="color:#0b216f">3</span></div>
<div class="t" style="left:475.6px;top:189px;font:16.8px/21px 'Liberation Mono',monospace;color:#1e1e1e;letter-spacing:0.02px;">Event
| <span style="color:#0000ff">where</span> TimeGenerated &gt; ago(<span style="color:#09885a">15m</span>)
| <span style="color:#0000ff">project</span> TimeGenerated, Source, EventID, table_CF</div>
<div class="rot" style="left:393.6px;top:528.6px;font-size:21.6px;line-height:26px;color:#201f1e;transform:rotate(90deg) scaleX(0.937)">Schema and Filter</div>
<div class="rot" style="left:1648.1px;top:509.3px;font-size:16.5px;line-height:20px;color:#201f1e;transform:rotate(90deg) scaleX(0.94)">Columns</div>

<div class="b" style="left:425px;top:826px;width:1182px;height:18px;background:#d6d6d6;"></div>
<div class="b" style="left:425px;top:826px;width:1164px;height:18px;background:#96999c;"></div>
<div class="b" style="left:1607px;top:826px;width:17px;height:18px;background:#ffffff;"></div>
<div class="b" style="left:425px;top:844px;width:1227px;height:1px;background:#d0d3d6;"></div>
<div class="b" style="left:425px;top:845px;width:1228px;height:17px;background:#ffffff;"></div>
<div class="b" style="left:528px;top:856px;width:1px;height:6px;background:#c6c6c6;"></div>
<div class="b" style="left:1541px;top:856px;width:1px;height:6px;background:#c6c6c6;"></div>
<div class="b" style="left:828px;top:862px;width:5px;height:6px;border:1px solid #4a4a4a;background:#fff"></div>
<svg style="left:0;top:0" width="1653" height="866" viewBox="0 0 1653 866"><g fill="#ed1c24"><path d="M889.6 222.3H995.2V255H889.6Z M893.3 226V251.5H991.55V226Z" fill-rule="evenodd"/><path d="M1216.6 462.3H1430.9V803.9H1216.6Z M1220.3 466V800.2H1427.1V466Z" fill-rule="evenodd"/></g></svg>
</div>
</body>
</html>
